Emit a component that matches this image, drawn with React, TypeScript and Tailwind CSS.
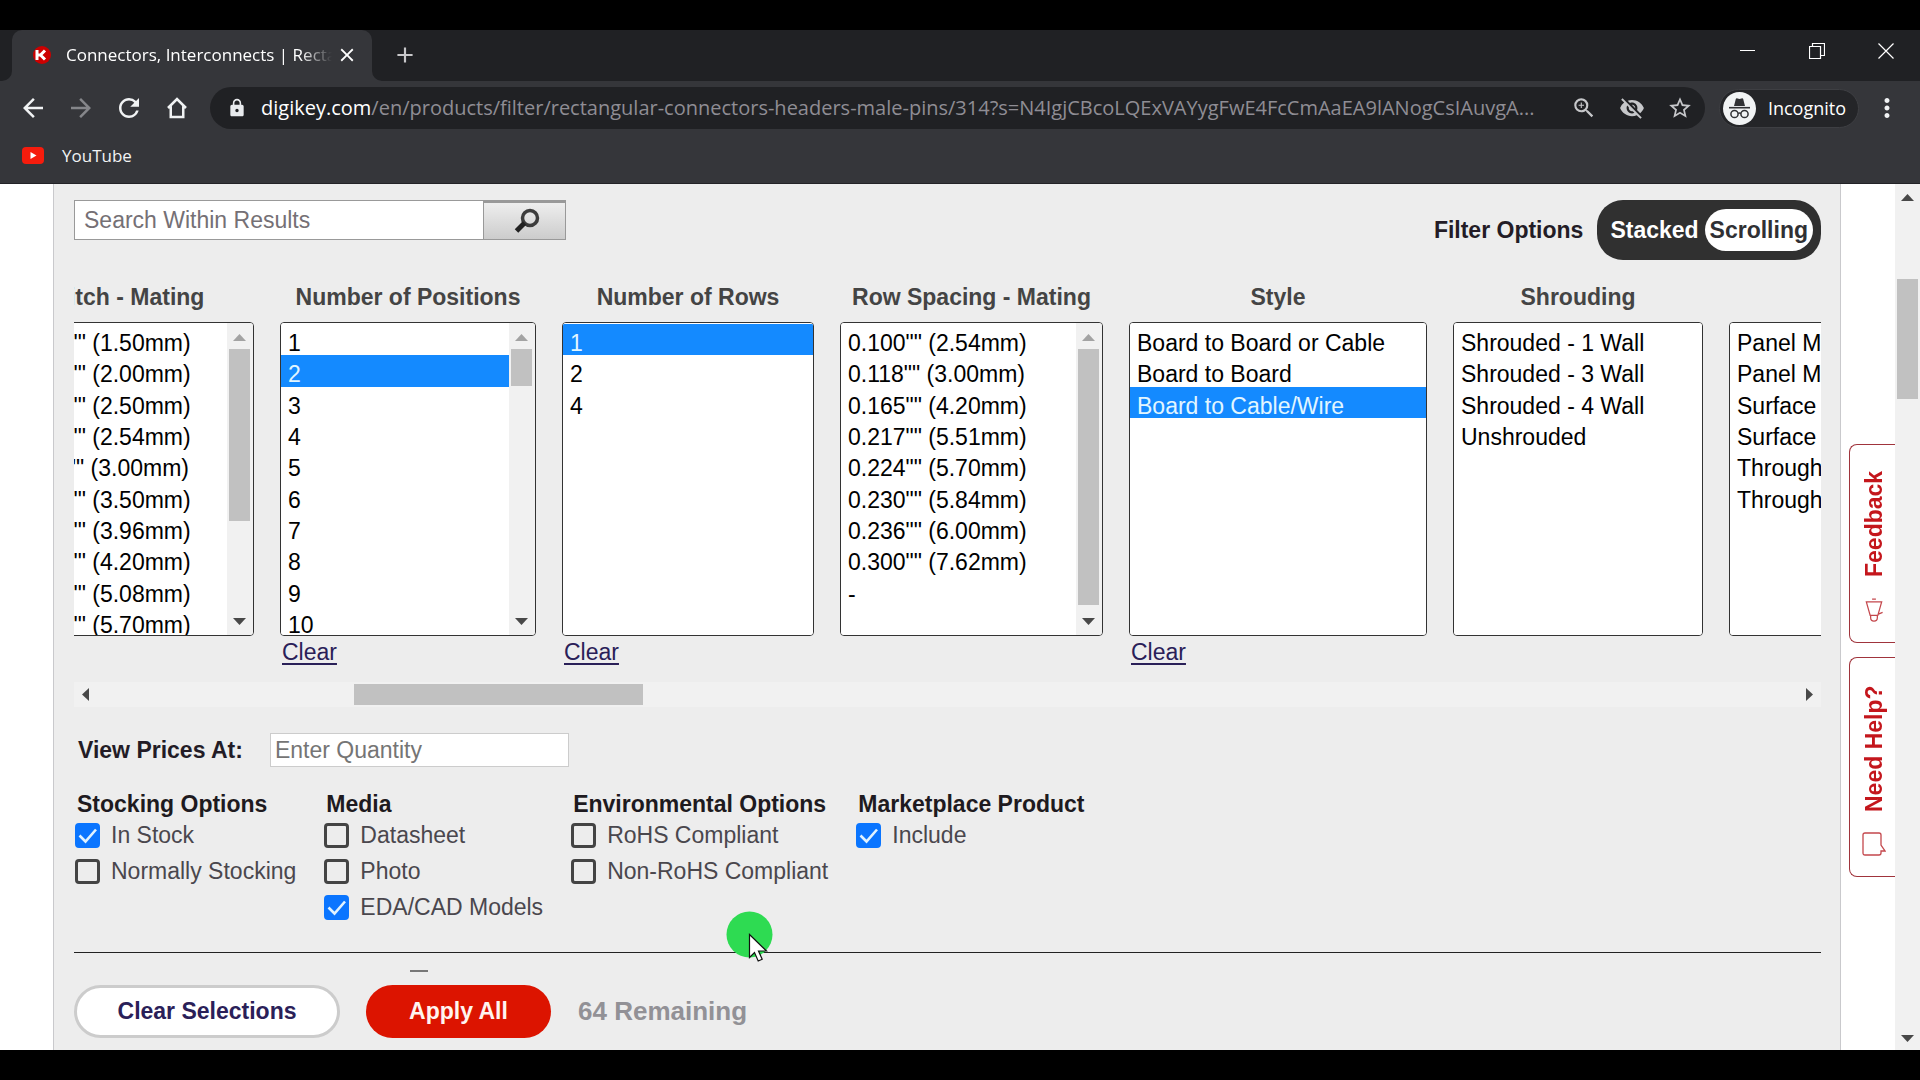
import React from "react";
import {
  MdAdd,
  MdArrowBack,
  MdArrowForward,
  MdClose,
  MdLock,
  MdMoreVert,
  MdRefresh,
  MdStarOutline,
  MdVisibilityOff,
  MdZoomIn,
} from "react-icons/md";

/* ---------- Browser chrome ---------- */

function TabStrip() {
  return (
    <div className="flex h-[51px] bg-[#202124] pl-3">
      <div className="relative flex w-[360px] items-center rounded-t-[10px] bg-[#35363a] pb-0.5 pl-5 pr-3">
        <svg className="absolute -left-2.5 bottom-0 size-2.5" viewBox="0 0 10 10" aria-hidden="true">
          <path d="M10 0v10H0A10 10 0 0 0 10 0z" fill="#35363a" />
        </svg>
        <svg className="absolute -right-2.5 bottom-0 size-2.5" viewBox="0 0 10 10" aria-hidden="true">
          <path d="M0 0v10h10A10 10 0 0 1 0 0z" fill="#35363a" />
        </svg>
        <svg className="mr-3.5 size-5 shrink-0" viewBox="0 0 20 20" aria-hidden="true">
          <circle cx="10" cy="10" r="9" fill="#c00" />
          <path d="M5 5v10M5.5 10h3M13 5.500l-4.500 4.500l4.500 4.500" stroke="#fff" strokeWidth="3" fill="none" />
        </svg>
        <div className="w-[266px] overflow-hidden whitespace-nowrap text-[17px] text-white [mask-image:linear-gradient(to_right,#000_88%,transparent)]">
          Connectors, Interconnects | Rectangular
        </div>
        <button type="button" aria-label="Close tab" className="ml-1 text-white">
          <MdClose size={22} />
        </button>
      </div>
      <button type="button" aria-label="New tab" className="ml-5 pb-0.5 text-[#c8c8ca]">
        <MdAdd size={26} />
      </button>
      <div className="ml-auto flex h-[42px] items-center text-white">
        <button type="button" aria-label="Minimize" className="flex w-[69px] justify-center">
          <svg width="16" height="16" viewBox="0 0 16 16">
            <path d="M0 7.500h15" stroke="currentColor" />
          </svg>
        </button>
        <button type="button" aria-label="Restore" className="flex w-[69px] justify-center">
          <svg width="16" height="16" viewBox="0 0 16 16" fill="none">
            <path d="M.5 3.500h11v12h-11zM3.500 3.500v-3h12v12h-4" stroke="currentColor" strokeWidth="1.200" />
          </svg>
        </button>
        <button type="button" aria-label="Close" className="flex w-[69px] justify-center">
          <svg width="16" height="16" viewBox="0 0 16 16">
            <path d="M.5.5l15 15M15.500.5l-15 15" stroke="currentColor" strokeWidth="1.200" />
          </svg>
        </button>
      </div>
    </div>
  );
}

function Toolbar() {
  return (
    <div className="flex items-center bg-[#35363a] pb-[3px] pl-[18px] pr-[18px] pt-1.5 text-[#f1f3f4]">
      <div className="flex gap-[18px]">
        <button type="button" aria-label="Back"><MdArrowBack size={30} /></button>
        <button type="button" aria-label="Forward" className="text-[#85868a]"><MdArrowForward size={30} /></button>
        <button type="button" aria-label="Reload"><MdRefresh size={30} /></button>
        <button type="button" aria-label="Home">
          <svg width="30" height="30" viewBox="0 0 24 24" fill="none" stroke="currentColor" strokeWidth="2">
            <path d="M4.800 12L12 4.800L19.200 12M7 10.500V19.200H17V10.500" strokeLinejoin="miter" />
          </svg>
        </button>
      </div>
      <div className="ml-[18px] flex h-[42px] min-w-0 flex-1 items-center rounded-full bg-[#202124] pl-[17px] pr-3">
        <MdLock size={20} className="shrink-0 text-[#e8eaed]" />
        <div className="ml-3.5 min-w-0 flex-1 overflow-hidden whitespace-nowrap text-[20px] text-[#8f8d94]">
          <span className="text-white">digikey.com</span>
          /en/products/filter/rectangular-connectors-headers-male-pins/314?s=N4IgjCBcoLQExVAYygFwE4FcCmAaEA9lANogCsIAuvgA...
        </div>
        <div className="flex gap-[22px] pl-4 text-[#c6c7ca]">
          <button type="button" aria-label="Zoom"><MdZoomIn size={26} /></button>
          <button type="button" aria-label="Third-party cookies blocked"><MdVisibilityOff size={26} /></button>
          <button type="button" aria-label="Bookmark this tab"><MdStarOutline size={26} /></button>
        </div>
      </div>
      <div className="ml-[14px] flex h-[39px] items-center rounded-full border border-[#3e3f43] bg-[#242528] pl-[3px] pr-3 text-[18px] text-white">
        <svg className="mr-3 size-[33px]" viewBox="0 0 33 33" fill="none" aria-hidden="true">
          <circle cx="16.500" cy="16.500" r="16.500" fill="#f1f3f4" />
          <path d="M11 14l1.800-7c.3-.9 1-.9 1.700-.6l2 .7l2-.7c.8-.3 1.400-.3 1.700.6l1.800 7z" fill="#303134" />
          <path d="M6 15.700h21" stroke="#303134" strokeWidth="1.600" />
          <circle cx="11.500" cy="22" r="3.600" stroke="#303134" strokeWidth="1.500" />
          <circle cx="21.500" cy="22" r="3.600" stroke="#303134" strokeWidth="1.500" />
          <path d="M15.100 21.500q1.400-1 2.800 0" stroke="#303134" strokeWidth="1.500" />
        </svg>
        Incognito
      </div>
      <button type="button" aria-label="Menu" className="ml-[13px]"><MdMoreVert size={30} /></button>
    </div>
  );
}

function Bookmarks() {
  return (
    <div className="flex h-[52px] items-center border-b border-[#232327] bg-[#35363a] pb-1 pl-[22px]">
      <a href="#youtube" className="flex items-center gap-[18px] text-[17px] text-[#f1f3f4]">
        <svg className="h-[17px] w-[22px]" viewBox="0 0 22 17" aria-hidden="true">
          <rect width="22" height="17" rx="4" fill="#f61c0d" />
          <path d="M8.500 5l6 3.500l-6 3.500z" fill="#fff" />
        </svg>
        YouTube
      </a>
    </div>
  );
}

/* ---------- Scrollbars ---------- */

const ARROWS = {
  up: "M0 7L6.500 0L13 7z",
  down: "M0 0h13L6.500 7z",
};

function Arrow({ dir, faded }: { dir: "up" | "down"; faded?: boolean }) {
  return (
    <svg width="13" height="7" viewBox="0 0 13 7" aria-hidden="true">
      <path d={ARROWS[dir]} fill={faded ? "#a3a3a3" : "#484848"} />
    </svg>
  );
}

function ListScrollbar({ thumb }: { thumb: number }) {
  return (
    <div className="flex w-[26px] shrink-0 flex-col items-center justify-between bg-[#f1f1f1] pb-2.5 pr-0.5 pt-[11px]">
      <div className="flex flex-col items-center gap-2">
        <Arrow dir="up" faded />
        <div className="w-[21px] bg-[#c1c1c1]" style={{ height: thumb }} />
      </div>
      <Arrow dir="down" />
    </div>
  );
}

/* ---------- Filter lists ---------- */

type Filter = {
  id: string;
  title: string;
  width: string;
  options: string[];
  selected?: string;
  thumb?: number;
  cut?: "start" | "end";
};

const FILTERS: Filter[] = [
  {
    id: "pitch",
    title: "Pitch - Mating",
    width: "w-[250px]",
    thumb: 172,
    cut: "start",
    options: [
      '0.059"" (1.50mm)',
      '0.079"" (2.00mm)',
      '0.098"" (2.50mm)',
      '0.100"" (2.54mm)',
      '0.118"" (3.00mm)',
      '0.138"" (3.50mm)',
      '0.156"" (3.96mm)',
      '0.165"" (4.20mm)',
      '0.200"" (5.08mm)',
      '0.224"" (5.70mm)',
    ],
  },
  {
    id: "positions",
    title: "Number of Positions",
    width: "w-[256px]",
    thumb: 37,
    selected: "2",
    options: ["1", "2", "3", "4", "5", "6", "7", "8", "9", "10"],
  },
  { id: "rows", title: "Number of Rows", width: "w-[252px]", selected: "1", options: ["1", "2", "4"] },
  {
    id: "spacing",
    title: "Row Spacing - Mating",
    width: "w-[263px]",
    thumb: 256,
    options: [
      '0.100"" (2.54mm)',
      '0.118"" (3.00mm)',
      '0.165"" (4.20mm)',
      '0.217"" (5.51mm)',
      '0.224"" (5.70mm)',
      '0.230"" (5.84mm)',
      '0.236"" (6.00mm)',
      '0.300"" (7.62mm)',
      "-",
    ],
  },
  {
    id: "style",
    title: "Style",
    width: "w-[298px]",
    selected: "Board to Cable/Wire",
    options: ["Board to Board or Cable", "Board to Board", "Board to Cable/Wire"],
  },
  {
    id: "shrouding",
    title: "Shrouding",
    width: "w-[250px]",
    options: ["Shrouded - 1 Wall", "Shrouded - 3 Wall", "Shrouded - 4 Wall", "Unshrouded"],
  },
  {
    id: "mounting",
    title: "",
    width: "w-[300px]",
    cut: "end",
    options: ["Panel Mount", "Panel Mount", "Surface Mount", "Surface Mount", "Through Hole", "Through Hole"],
  },
];

function FilterList({ filter }: { filter: Filter }) {
  const column = (
    <div className={`${filter.width} shrink-0`}>
      <label htmlFor={filter.id} className="block h-[42px] text-center font-bold leading-[34px] text-[#444]">
        {filter.title}
      </label>
      <div className="flex h-[314px] overflow-hidden rounded-[4px] border border-[#333] bg-white">
        <select
          id={filter.id}
          aria-label={filter.title || "Mounting Type"}
          multiple
          defaultValue={filter.selected ? [filter.selected] : []}
          className="h-full min-w-0 flex-1 appearance-none overflow-hidden bg-white pt-px text-black outline-none"
        >
          {filter.options.map((o, i) => (
            <option
              key={i}
              value={o}
              className="h-[31px] whitespace-pre px-[7px] pb-0 pt-1.5 leading-[27px] checked:bg-[linear-gradient(#148aff,#148aff)] checked:[-webkit-text-fill-color:#e2f6ff] nth-[3n+2]:h-8"
            >
              {o}
            </option>
          ))}
        </select>
        {filter.thumb ? <ListScrollbar thumb={filter.thumb} /> : null}
      </div>
      <div className="h-8 leading-8">
        {filter.selected ? (
          <a href={`#clear-${filter.id}`} className="ml-0.5 text-[#2a2058] underline decoration-2 underline-offset-3">
            Clear
          </a>
        ) : null}
      </div>
    </div>
  );
  if (filter.cut === "start") {
    return <div className="flex w-[180px] shrink-0 justify-end overflow-hidden">{column}</div>;
  }
  return column;
}

function HorizontalScrollbar() {
  return (
    <div className="mt-3.5 flex h-[25px] items-center bg-[#f1f1f1] px-2">
      <svg width="7" height="13" viewBox="0 0 7 13" aria-hidden="true">
        <path d="M7 0v13L0 6.500z" fill="#484848" />
      </svg>
      <div className="ml-2.5 mr-2 flex flex-1">
        <div className="w-[15%]" />
        <div className="h-[21px] w-[17%] bg-[#c1c1c1]" />
      </div>
      <svg width="7" height="13" viewBox="0 0 7 13" aria-hidden="true">
        <path d="M0 0v13l7-6.500z" fill="#484848" />
      </svg>
    </div>
  );
}

/* ---------- Check box groups ---------- */

const GROUPS = [
  { title: "Stocking Options", items: [["In Stock", true], ["Normally Stocking", false]] },
  { title: "Media", items: [["Datasheet", false], ["Photo", false], ["EDA/CAD Models", true]] },
  { title: "Environmental Options", items: [["RoHS Compliant", false], ["Non-RoHS Compliant", false]] },
  { title: "Marketplace Product", items: [["Include", true]] },
] as { title: string; items: [string, boolean][] }[];

function Check({ label, checked }: { label: string; checked: boolean }) {
  return (
    <label className="flex h-9 items-center text-[#4a474d]">
      <span className="mr-[11px] grid size-[25px]">
        <input
          type="checkbox"
          defaultChecked={checked}
          className="peer col-start-1 row-start-1 size-[25px] appearance-none rounded-[4px] border-3 border-[#444] checked:border-[#0a75ff] checked:bg-[#0a75ff]"
        />
        <svg
          className="pointer-events-none invisible col-start-1 row-start-1 size-[25px] peer-checked:visible"
          viewBox="0 0 25 25"
          fill="none"
          aria-hidden="true"
        >
          <path d="M4.500 12.500l6 6L21 6.500" stroke="#dff2ff" strokeWidth="2.600" />
        </svg>
      </span>
      {label}
    </label>
  );
}

function SideTab({ label, className, children }: { label: string; className: string; children: React.ReactNode }) {
  return (
    <button
      type="button"
      className={`${className} flex w-[46px] rotate-180 items-center rounded-r-[8px] border border-l-0 border-[#a0343c] pb-[26px] pr-1 font-bold text-[#c4161c] [writing-mode:vertical-rl]`}
    >
      {children}
      {label}
    </button>
  );
}

export default function App() {
  return (
    <div className="relative min-h-screen bg-black pt-[30px] font-['Open_Sans','Noto_Sans',sans-serif]">
      <header>
        <TabStrip />
        <Toolbar />
        <Bookmarks />
      </header>

      <div className="flex bg-white font-['Liberation_Sans',Arial,sans-serif] text-[23px]">
        <main className="ml-[53px] min-w-0 flex-1 border-x border-[#c9c9cc] bg-[#ededed] pb-3 pl-5 pr-[19px] pt-4">
          <div className="flex items-start justify-between">
            <form className="flex h-10 w-[492px] border border-[#999]" onSubmit={(e) => e.preventDefault()}>
              <input
                type="text"
                aria-label="Search Within Results"
                placeholder="Search Within Results"
                className="min-w-0 flex-1 bg-white px-[9px] text-black outline-none placeholder:text-[#757075]"
              />
              <button
                type="submit"
                aria-label="Search"
                className="flex w-[82px] items-center justify-center border-l border-t-2 border-[#999] bg-linear-to-b from-[#eee] to-[#ccc]"
              >
                <svg className="ml-1 size-[26px]" viewBox="0 0 26 26" fill="none" aria-hidden="true">
                  <circle cx="16" cy="10" r="7.500" stroke="#3c3c3c" strokeWidth="3.500" />
                  <path d="M10.500 15l-8 8" stroke="#222" strokeWidth="5" />
                </svg>
              </button>
            </form>
            <div className="flex items-center gap-[14px] font-bold text-[#231c26]">
              <span>Filter Options</span>
              <div className="flex h-[60px] items-center rounded-[26px] bg-[#303030] pl-[13px] pr-2">
                <button type="button" className="text-white">Stacked</button>
                <button type="button" className="ml-1.5 h-[42px] rounded-full bg-white px-[5px] text-[#303034]">
                  Scrolling
                </button>
              </div>
            </div>
          </div>

          <section aria-label="Filters">
            <div className="mt-5 flex gap-[26px] overflow-hidden">
              {FILTERS.map((f) => (
                <FilterList key={f.id} filter={f} />
              ))}
            </div>
            <HorizontalScrollbar />
          </section>

          <div className="mt-[26px] flex items-center">
            <label htmlFor="quantity" className="ml-1 mr-[27px] font-bold text-[#231c26]">
              View Prices At:
            </label>
            <input
              id="quantity"
              type="text"
              placeholder="Enter Quantity"
              className="h-[34px] w-[299px] border border-[#ccc] bg-white px-1 text-black outline-none placeholder:text-[#757575]"
            />
          </div>

          <div className="ml-px mt-[22px] flex gap-7">
            {GROUPS.map((g) => (
              <fieldset key={g.title}>
                <legend className="pl-0.5 font-bold leading-7 text-[#1e1a20]">{g.title}</legend>
                {g.items.map(([label, checked]) => (
                  <Check key={label} label={label} checked={checked} />
                ))}
              </fieldset>
            ))}
          </div>

          <hr className="mt-[26px] border-[#222]" />
          <div className="ml-[336px] mt-[17px] h-0.5 w-[18px] bg-[#777]" />

          <div className="mt-[13px] flex items-center font-bold">
            <button type="button" className="h-[53px] w-[266px] rounded-full border-3 border-[#ccc] bg-white text-[#2a2058]">
              Clear Selections
            </button>
            <button type="button" className="ml-[26px] h-[53px] w-[185px] rounded-full bg-[#dc1400] text-[#fff4f0]">
              Apply All
            </button>
            <span className="ml-[27px] text-[26px] text-[#929196]">64 Remaining</span>
          </div>
        </main>

        <aside className="flex w-[54px] flex-col items-end gap-3.5 pt-[260px]">
          <SideTab label="Feedback" className="h-[199px]">
            <svg className="mb-5 mt-5 h-[26px] w-[20px] rotate-180" viewBox="0 0 20 26" fill="none" stroke="#c4474c" strokeWidth="1.300" aria-hidden="true">
              <path d="M2 5h16l-4 14H6zM6.500 19v2.500a3.500 3.500 0 0 0 7 0V19M14 18l5-2M8 2h4" />
            </svg>
          </SideTab>
          <SideTab label="Need Help?" className="h-[220px]">
            <svg className="mb-5 mt-5 h-[24px] w-[24px] rotate-180" viewBox="0 0 24 24" fill="none" stroke="#c4474c" strokeWidth="1.300" aria-hidden="true">
              <path d="M3 1h14q2 0 2 2v10l4 6h-4v2q0 2-2 2H3q-2 0-2-2V3q0-2 2-2z" />
            </svg>
          </SideTab>
        </aside>

        <div className="flex w-[25px] flex-col items-center justify-between bg-[#f1f1f1] pb-2 pt-[10px]">
          <div className="flex flex-col items-center">
            <Arrow dir="up" />
            <div className="mt-[78px] h-[120px] w-[21px] bg-[#c1c1c1]" />
          </div>
          <Arrow dir="down" />
        </div>
      </div>

      <svg className="pointer-events-none absolute left-[725px] top-[910px] h-[56px] w-[50px]" viewBox="0 0 50 56" aria-hidden="true">
        <circle cx="24.500" cy="24.500" r="23" fill="#2edb52" />
        <path
          d="M24.500 24.500v23l5-5l3.700 8.500l4-1.700l-3.700-8.300h8z"
          fill="#fff"
          stroke="#111"
          strokeWidth="1.200"
        />
      </svg>
    </div>
  );
}
